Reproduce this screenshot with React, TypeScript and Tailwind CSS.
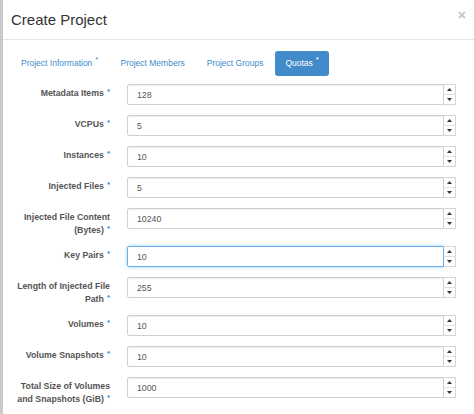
import * as React from 'react'

const quotas = [
  { label: 'Metadata Items', value: '128' },
  { label: 'VCPUs', value: '5' },
  { label: 'Instances', value: '10' },
  { label: 'Injected Files', value: '5' },
  { label: 'Injected File Content (Bytes)', value: '10240' },
  { label: 'Key Pairs', value: '10', focused: true },
  { label: 'Length of Injected File Path', value: '255' },
  { label: 'Volumes', value: '10' },
  { label: 'Volume Snapshots', value: '10' },
  { label: 'Total Size of Volumes and Snapshots (GiB)', value: '1000' },
]

const tabs = [
  { name: 'Project Information', required: true },
  { name: 'Project Members' },
  { name: 'Project Groups' },
  { name: 'Quotas', required: true, active: true },
]

function Spinner() {
  return (
    <div className="flex h-[21px] w-[12px] shrink-0 flex-col border border-l-0 border-[#d6d6d6] bg-white">
      <div className="flex flex-1 items-center justify-center border-b border-[#e2e2e2]">
        <svg width="5" height="3" viewBox="0 0 5 3">
          <path d="M0 3 L2.5 0 L5 3 Z" fill="#333" />
        </svg>
      </div>
      <div className="flex flex-1 items-center justify-center">
        <svg width="5" height="3" viewBox="0 0 5 3">
          <path d="M0 0 L2.5 3 L5 0 Z" fill="#333" />
        </svg>
      </div>
    </div>
  )
}

function QuotaRow({ label, value, focused }: { label: string; value: string; focused?: boolean }) {
  return (
    <div className="flex items-start gap-4">
      <label className="w-[100px] shrink-0 pt-[3px] pr-[1px] text-right text-[8.75px] font-bold leading-[12.5px] text-[#555] after:ml-[3px] after:align-top after:text-[8px] after:leading-[9px] after:text-[#428bca] after:content-['*']">
        {label}
      </label>
      <div className="flex">
        <input
          readOnly
          value={value}
          className={
            focused
              ? 'h-[21px] w-[317px] rounded-l-[2px] border border-[#66afe9] px-[9px] text-[8.75px] text-[#555] shadow-[0_0_4px_rgba(102,175,233,0.6)] outline-none'
              : 'h-[21px] w-[317px] rounded-l-[2px] border border-[#d0d0d0] px-[9px] text-[8.75px] text-[#555] shadow-[inset_0_1px_1px_rgba(0,0,0,0.075)] outline-none'
          }
        />
        <Spinner />
      </div>
    </div>
  )
}

export default function App() {
  return (
    <div className="h-[414px] w-[474px] overflow-hidden border-l-[3px] border-[#c9c9c9] bg-white font-['Liberation_Sans',Arial,sans-serif]">
      <div className="flex h-[40px] items-center justify-between border-b border-[#e5e5e5] pl-[8px] pr-[8px]">
        <h1 className="text-[15px] leading-none text-[#333]">Create Project</h1>
        <span className="-mt-[10px] text-[14px] font-bold leading-none text-[#c4c4c4]">×</span>
      </div>
      <div className="mt-[11px] flex gap-[2px] pl-[8px]">
        {tabs.map((t) => (
          <div
            key={t.name}
            className={
              t.active
                ? 'flex h-[25px] items-center rounded-[3px] bg-[#428bca] px-[10px] text-[8.5px] text-white'
                : 'flex h-[25px] items-center rounded-[3px] px-[10px] text-[8.5px] text-[#428bca]'
            }
          >
            {t.name}
            {t.required && (
              <span className={t.active ? 'ml-[3px] self-start pt-[5px] text-[8px] leading-none text-white' : 'ml-[3px] self-start pt-[5px] text-[8px] leading-none text-[#428bca]'}>
                *
              </span>
            )}
          </div>
        ))}
      </div>
      <div className="mt-[8px] flex flex-col gap-[10px] pl-[8px]">
        {quotas.map((q) => (
          <QuotaRow key={q.label} {...q} />
        ))}
      </div>
    </div>
  )
}
